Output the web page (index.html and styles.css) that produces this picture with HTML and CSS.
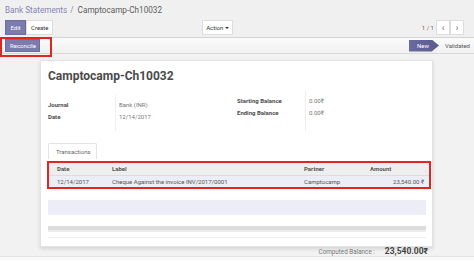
FILE: index.html
```html
<html>
    <head>
        <link rel="stylesheet" href="styles.css">
    </head>
    <body>
        <div class="control-panel">
            <div class="breadcrumb">
                <span class="crumb-link">Bank Statements</span><span class="crumb-sep">/</span><span class="crumb-current">Camptocamp-Ch10032</span>
            </div>
            <div class="cp-row">
                <div class="cp-buttons">
                    <button class="btn btn-primary btn-edit">Edit</button>
                    <button class="btn btn-default btn-create">Create</button>
                </div>
                <div class="cp-sidebar">
                    <button class="btn btn-default btn-action">Action <span class="caret"></span></button>
                </div>
                <div class="cp-pager">
                    <span class="pager-value">1 / 1</span>
                    <button class="btn btn-default pager-btn">&#8249;</button>
                    <button class="btn btn-default pager-btn">&#8250;</button>
                </div>
            </div>
        </div>
        <div class="statusbar">
            <button class="btn btn-primary btn-reconcile">Reconcile</button>
            <div class="mark mark-reconcile"></div>
            <div class="status-steps">
                <span class="step step-active">New</span>
                <span class="step">Validated</span>
            </div>
        </div>
        <div class="content">
            <div class="sheet-column">
                <div class="sheet">
                    <h1 class="title">Camptocamp-Ch10032</h1>
                    <div class="groups">
                        <div class="group group-left">
                            <div class="labels">
                                <div class="field-label">Journal</div>
                                <div class="field-label">Date</div>
                            </div>
                            <div class="values">
                                <div class="field-value">Bank (INR)</div>
                                <div class="field-value">12/14/2017</div>
                            </div>
                        </div>
                        <div class="group group-right">
                            <div class="labels">
                                <div class="field-label">Starting Balance</div>
                                <div class="field-label">Ending Balance</div>
                            </div>
                            <div class="values">
                                <div class="field-value">0.00₹</div>
                                <div class="field-value">0.00₹</div>
                            </div>
                        </div>
                    </div>
                    <div class="tabs">
                        <span class="tab">Transactions</span>
                    </div>
                    <div class="lines">
                        <div class="line-row line-head">
                            <span class="col-date">Date</span>
                            <span class="col-label">Label</span>
                            <span class="col-partner">Partner</span>
                            <span class="col-amount">Amount</span>
                        </div>
                        <div class="line-row line-data">
                            <span class="col-date">12/14/2017</span>
                            <span class="col-label">Cheque Against the invoice INV/2017/0001</span>
                            <span class="col-partner">Camptocamp</span>
                            <span class="col-amount col-num">23,540.00 ₹</span>
                        </div>
                    </div>
                    <div class="empty-row"></div>
                    <div class="rule-band"></div>
                    <div class="rule-thin"></div>
                </div>
                <div class="computed">
                    <span class="computed-label">Computed Balance :</span>
                    <span class="computed-value">23,540.00₹</span>
                </div>
            </div>
        </div>
        <div class="bottom-strip"></div>
    </body>
</html>
```

FILE: styles.css
```css
body {
    margin: 0;
    background: #f2f2f2;
    font-family: Roboto, "Liberation Sans", sans-serif;
    color: #4c4c4c;
    overflow: hidden;
}
.control-panel {
    background: #f1f0f0;
    padding: 2px 5px 0 5px;
    height: 35px;
    border-bottom: 1px solid #d4d4d4;
}
.breadcrumb {
    font-size: 8.2px;
    line-height: 17px;
    height: 17px;
}
.crumb-link {
    color: #8584b3;
}
.crumb-sep {
    color: #888;
    margin: 0 4px 0 3px;
}
.crumb-current {
    color: #5c5c5c;
}
.cp-row {
    display: grid;
    grid-template-columns: 197px 1fr auto;
    align-items: center;
    height: 16px;
}
.btn {
    font-family: Roboto, "Liberation Sans", sans-serif;
    font-size: 6px;
    border: 1px solid #ddd;
    background: white;
    color: #333;
    padding: 0 4px;
    height: 15px;
    margin: 0;
    cursor: pointer;
    white-space: nowrap;
}
.btn-primary {
    background: #7c7bad;
    border-color: #6d6ca0;
    color: white;
}
.cp-buttons {
    display: flex;
}
.btn-edit {
    width: 21px;
    height: 15px;
}
.btn-create {
    width: 27px;
    height: 15px;
}
.btn-action {
    width: 31px;
    height: 15px;
    margin-top: 1px;
    padding: 0 2px;
}
.caret {
    display: inline-block;
    width: 0;
    height: 0;
    border-left: 2px solid transparent;
    border-right: 2px solid transparent;
    border-top: 2px solid #333;
    vertical-align: middle;
}
.cp-pager {
    display: flex;
    align-items: center;
    margin-top: 1px;
    margin-right: 5px;
}
.pager-value {
    font-size: 6px;
    color: #666;
    margin-right: 2px;
}
.pager-btn {
    width: 14px;
    height: 15px;
    font-size: 9px;
    line-height: 10px;
    padding: 0;
    color: #555;
}
.statusbar {
    position: relative;
    display: flex;
    align-items: center;
    justify-content: space-between;
    height: 15px;
    padding-left: 5px;
    background: linear-gradient(#fbfbfb, #f0f0f0);
    border-bottom: 1px solid #d8d8d8;
}
.btn-reconcile {
    width: 35px;
    height: 13px;
    font-size: 6px;
}
.mark {
    position: absolute;
    border: 2px solid #e52420;
    box-sizing: border-box;
}
.mark-reconcile {
    left: 0;
    top: -1px;
    width: 52px;
    height: 20px;
}
.status-steps {
    display: flex;
    align-items: center;
    height: 100%;
}
.step {
    font-size: 6px;
    color: #555;
    padding: 0 4px 0 5px;
}
.step-active {
    display: flex;
    align-items: center;
    height: 12px;
    width: 22px;
    padding: 0 0 0 8px;
    margin-right: 1px;
    color: white;
    background: linear-gradient(90deg, #6b6aa0, #5a5990);
    clip-path: polygon(0 0, 76% 0, 100% 50%, 76% 100%, 0 100%);
}
.content {
    display: flex;
    padding: 6px 41px 0 40px;
    height: 202px;
    box-sizing: border-box;
}
.sheet-column {
    width: 393px;
}
.sheet {
    background: white;
    border: 1px solid #e2e2e2;
    box-shadow: 0 2px 4px rgba(0, 0, 0, 0.12);
    height: 187px;
    box-sizing: border-box;
    padding: 7px 0 0 7px;
}
.title {
    margin: 0;
    font-size: 12px;
    line-height: 16px;
    font-weight: bold;
    color: #4a4a4a;
}
.groups {
    display: grid;
    grid-template-columns: 189px 1fr;
    margin-top: 11px;
    height: 36px;
}
.group {
    display: flex;
}
.group-left {
    padding-top: 4px;
}
.labels {
    border-right: 1px solid #eee;
    margin-top: -4px;
    padding-top: 4px;
}
.group-left .labels {
    width: 67px;
}
.group-right .labels {
    width: 68px;
}
.values {
    padding-left: 3px;
}
.field-label {
    font-size: 6px;
    font-weight: bold;
    line-height: 12px;
    height: 12px;
    color: #4c4c4c;
}
.field-value {
    font-size: 6px;
    line-height: 12px;
    height: 12px;
    color: #777;
}
.tabs {
    display: flex;
    margin-top: 12px;
}
.tab {
    font-size: 6px;
    color: #666;
    line-height: 15px;
    padding: 0 7px;
    border: 1px solid #e4e4e4;
    border-bottom: none;
    border-radius: 2px 2px 0 0;
    width: 33px;
}
.lines {
    margin: 2px 0 0 -1px;
    width: 384px;
    box-sizing: border-box;
    border: 2px solid #e52420;
}
.line-row {
    display: flex;
    font-size: 6px;
    height: 12px;
    line-height: 12px;
}
.line-head {
    background: #eeeeee;
    font-weight: bold;
    color: #555;
    border-bottom: 1px solid #ddd;
}
.line-data {
    background: #ecedf6;
    color: #555;
    height: 11px;
    line-height: 11px;
}
.col-date {
    width: 55px;
    padding-left: 8px;
}
.col-label {
    width: 192px;
}
.col-partner {
    width: 66px;
}
.col-amount {
    width: 54px;
    white-space: nowrap;
}
.col-num {
    text-align: right;
}
.empty-row {
    margin-top: 11px;
    width: 378px;
    height: 15px;
    background: #ecedf6;
}
.rule-band {
    margin-top: 11px;
    width: 378px;
    height: 4px;
    background: #dcdcdc;
    border-bottom: 2px solid #ececec;
}
.rule-thin {
    margin-top: 5px;
    width: 378px;
    height: 1px;
    background: #eeeeee;
}
.computed {
    display: flex;
    justify-content: flex-end;
    align-items: baseline;
    margin-top: -1px;
    padding-right: 5px;
}
.computed-label {
    font-size: 6.3px;
    color: #777;
    margin-right: 10px;
}
.computed-value {
    font-size: 8.5px;
    font-weight: bold;
    color: #444;
}
.bottom-strip {
    height: 5px;
    border-top: 1px solid #e3e3e3;
    background: #f9f9f9;
}
```
